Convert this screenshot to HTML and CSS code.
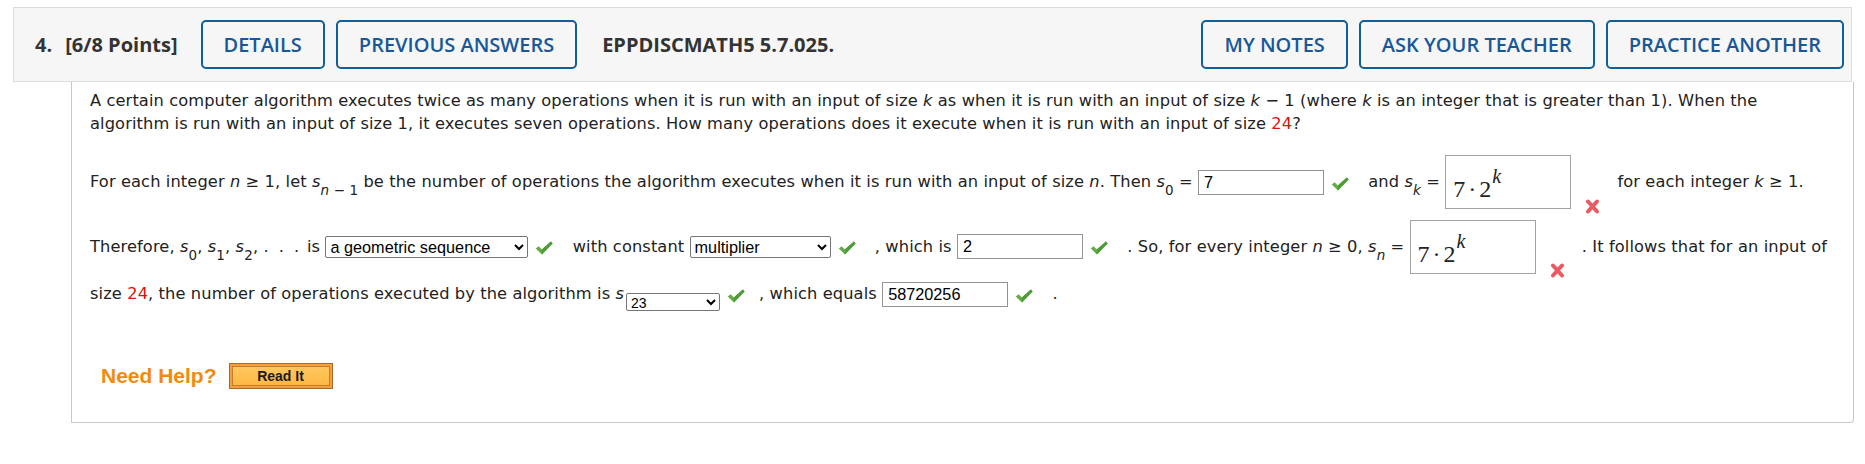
FILE: index.html
```html
<!DOCTYPE html>
<html lang="en">
<head>
<meta charset="utf-8">
<title>Question 4</title>
<link rel="stylesheet" href="styles.css">
</head>
<body>
<div class="question">
  <div class="qhead">
    <span class="qnum">4.</span><span class="qpts">[6/8 Points]</span>
    <div class="hgroup">
      <button class="hbtn">DETAILS</button>
      <button class="hbtn">PREVIOUS ANSWERS</button>
    </div>
    <span class="qid">EPPDISCMATH5 5.7.025.</span>
    <div class="hgroup hright">
      <button class="hbtn">MY NOTES</button>
      <button class="hbtn">ASK YOUR TEACHER</button>
      <button class="hbtn">PRACTICE ANOTHER</button>
    </div>
  </div>
  <div class="qbody">
    <p class="prob">A certain computer algorithm executes twice as many operations when it is run with an input of size <i>k</i> as when it is run with an input of size <i>k</i> &minus; 1 (where <i>k</i> is an integer that is greater than 1). When the<br>algorithm is run with an input of size 1, it executes seven operations. How many operations does it execute when it is run with an input of size <span class="red">24</span>?</p>

    <div class="row r2">For each integer <i>n</i> &ge; 1, let <i>s</i><sub><i>n</i> &minus; 1</sub> be the number of operations the algorithm executes when it is run with an input of size <i>n</i>. Then <i>s</i><sub>0</sub> = <input class="tin" type="text" value="7" readonly><span class="ok"><svg viewBox="0 0 18 14" width="18" height="14"><path d="M0.8 7.6 L3.6 5.2 L6.8 8.6 L15.9 0.6 L17.6 2.4 L6.9 13.4 Z" fill="#62ad47"/><path d="M6.8 8.6 L15.9 0.6 L17.6 2.4 L6.9 13.4 Z" fill="#4f9b37"/></svg></span> and <i>s</i><sub><i>k</i></sub> = <span class="mathbox">7<span class="mdot">&middot;</span>2<span class="msup">k</span></span><span class="bad"><svg viewBox="0 0 15 15" width="15" height="15"><path d="M3 2.5 L12 12.5 M12 2.5 L3 12.5" stroke="#e95a62" stroke-width="4" stroke-linecap="round"/></svg></span> for each integer <i>k</i> &ge; 1.</div>

    <div class="row r3">Therefore, <i>s</i><sub>0</sub>, <i>s</i><sub>1</sub>, <i>s</i><sub>2</sub>, <span class="dots">. . .</span> is <select class="sel sel1"><option>a geometric sequence</option></select><span class="ok"><svg viewBox="0 0 18 14" width="18" height="14"><path d="M0.8 7.6 L3.6 5.2 L6.8 8.6 L15.9 0.6 L17.6 2.4 L6.9 13.4 Z" fill="#62ad47"/><path d="M6.8 8.6 L15.9 0.6 L17.6 2.4 L6.9 13.4 Z" fill="#4f9b37"/></svg></span> with constant <select class="sel sel2"><option>multiplier</option></select><span class="ok"><svg viewBox="0 0 18 14" width="18" height="14"><path d="M0.8 7.6 L3.6 5.2 L6.8 8.6 L15.9 0.6 L17.6 2.4 L6.9 13.4 Z" fill="#62ad47"/><path d="M6.8 8.6 L15.9 0.6 L17.6 2.4 L6.9 13.4 Z" fill="#4f9b37"/></svg></span> , which is <input class="tin" type="text" value="2" readonly><span class="ok"><svg viewBox="0 0 18 14" width="18" height="14"><path d="M0.8 7.6 L3.6 5.2 L6.8 8.6 L15.9 0.6 L17.6 2.4 L6.9 13.4 Z" fill="#62ad47"/><path d="M6.8 8.6 L15.9 0.6 L17.6 2.4 L6.9 13.4 Z" fill="#4f9b37"/></svg></span> . So, for every integer <i>n</i> &ge; 0, <i>s</i><sub><i>n</i></sub> = <span class="mathbox">7<span class="mdot">&middot;</span>2<span class="msup">k</span></span><span class="bad"><svg viewBox="0 0 15 15" width="15" height="15"><path d="M3 2.5 L12 12.5 M12 2.5 L3 12.5" stroke="#e95a62" stroke-width="4" stroke-linecap="round"/></svg></span> . It follows that for an input of<br>size <span class="red">24</span>, the number of operations executed by the algorithm is <i>s</i><select class="sel sel3"><option>23</option></select><span class="ok"><svg viewBox="0 0 18 14" width="18" height="14"><path d="M0.8 7.6 L3.6 5.2 L6.8 8.6 L15.9 0.6 L17.6 2.4 L6.9 13.4 Z" fill="#62ad47"/><path d="M6.8 8.6 L15.9 0.6 L17.6 2.4 L6.9 13.4 Z" fill="#4f9b37"/></svg></span>, which equals <input class="tin" type="text" value="58720256" readonly><span class="ok"><svg viewBox="0 0 18 14" width="18" height="14"><path d="M0.8 7.6 L3.6 5.2 L6.8 8.6 L15.9 0.6 L17.6 2.4 L6.9 13.4 Z" fill="#62ad47"/><path d="M6.8 8.6 L15.9 0.6 L17.6 2.4 L6.9 13.4 Z" fill="#4f9b37"/></svg></span> .</div>

    <div class="help">
      <span class="needhelp">Need Help?</span>
      <span class="readit"><span class="readit-in">Read It</span></span>
    </div>
  </div>
</div>
</body>
</html>
```

FILE: styles.css
```css
html, body {
  margin: 0;
  padding: 0;
  background: #ffffff;
}

.question {
  padding: 7px 13px 0 13px;
}

.qhead {
  display: flex;
  align-items: center;
  box-sizing: border-box;
  height: 75px;
  border: 1px solid #dddddd;
  background: #f6f6f6;
  padding: 0 7px 0 21px;
  font-family: "Open Sans", "Liberation Sans", sans-serif;
  color: #333333;
}

.qnum {
  font-weight: 700;
  font-size: 20px;
  margin-right: 13px;
}

.qpts {
  font-weight: 700;
  font-size: 20px;
  margin-right: 23px;
}

.qid {
  font-weight: 700;
  font-size: 20px;
  margin-left: 25px;
}

.hgroup {
  display: flex;
  gap: 11px;
}

.hright {
  margin-left: auto;
}

.hbtn {
  box-sizing: border-box;
  height: 49px;
  padding: 0 21px;
  border: 2px solid #0f5f98;
  border-radius: 5px;
  background: #f6f6f6;
  color: #17589a;
  font-family: "Open Sans", "Liberation Sans", sans-serif;
  font-weight: 600;
  font-size: 20px;
  text-transform: uppercase;
  cursor: pointer;
}

.qbody {
  margin-left: 58px;
  margin-right: -2px;
  border: 1px solid #c9c9c9;
  border-top: none;
  border-radius: 0 0 4px 0;
  padding: 7px 10px 33px 18px;
  font-family: "DejaVu Sans", Verdana, sans-serif;
  font-size: 16.25px;
  letter-spacing: 0.1px;
  line-height: 23px;
  color: #222222;
  white-space: nowrap;
}

.prob {
  margin: 0;
}

.red {
  color: #e01010;
}

i {
  font-style: italic;
}

sub {
  font-size: 13.5px;
  line-height: 0;
  vertical-align: -8px;
}

.dots {
  letter-spacing: 2.5px;
}

.row {
  margin: 0;
}

.r2 {
  margin-top: 20px;
}

.r3 {
  margin-top: 2px;
}

.tin {
  box-sizing: border-box;
  width: 126px;
  height: 25px;
  border: 1px solid #929292;
  padding: 0 5px;
  margin: 0;
  font-family: "Liberation Sans", Arial, sans-serif;
  font-size: 16.25px;
  letter-spacing: 0;
  color: #000000;
  background: #ffffff;
  vertical-align: middle;
}

.sel {
  box-sizing: border-box;
  height: 22px;
  margin: 0;
  font-family: "Liberation Sans", Arial, sans-serif;
  font-size: 16.25px;
  letter-spacing: 0;
  color: #000000;
  background: #ffffff;
  border: 1px solid #767676;
  border-radius: 2px;
  vertical-align: middle;
}

.sel1 {
  width: 203px;
}

.sel2 {
  width: 141px;
}

.sel3 {
  width: 94px;
  height: 18px;
  font-size: 14px;
  vertical-align: -9px;
  margin-left: 2px;
}

.ok {
  display: inline-block;
  width: 18px;
  height: 14px;
  margin: 0 14px 0 7px;
  vertical-align: -4px;
}

.ok svg,
.bad svg {
  display: block;
}

.mathbox {
  display: inline-block;
  box-sizing: border-box;
  width: 126px;
  height: 54px;
  border: 1px solid #a3a3a3;
  padding: 20px 7px 0 7px;
  font-family: "Liberation Serif", "Times New Roman", serif;
  font-size: 24px;
  letter-spacing: 0;
  line-height: 24px;
  color: #222222;
  vertical-align: middle;
}

.mdot {
  margin: 0 3px;
}

.msup {
  font-style: italic;
  font-size: 20px;
  line-height: 0;
  vertical-align: 14px;
  margin-left: 1px;
}

.bad {
  display: inline-block;
  width: 15px;
  height: 15px;
  padding-bottom: 4px;
  margin: 0 12px 0 14px;
  vertical-align: -31px;
}

.help {
  display: flex;
  align-items: center;
  gap: 12px;
  margin-top: 52px;
  padding-left: 11px;
}

.needhelp {
  font-family: "Liberation Sans", Arial, sans-serif;
  font-weight: 700;
  font-size: 21px;
  letter-spacing: 0;
  line-height: 26px;
  color: #f28a0c;
}

.readit {
  display: flex;
  box-sizing: border-box;
  width: 104px;
  height: 26px;
  padding: 2px;
  border: 1px solid #a9692c;
  background: #f3a03c;
}

.readit-in {
  flex: 1;
  display: flex;
  align-items: center;
  justify-content: center;
  border: 1px solid #c67c30;
  background: linear-gradient(#ffc75e, #ffb845);
  font-family: "Liberation Sans", Arial, sans-serif;
  font-weight: 700;
  font-size: 14px;
  letter-spacing: 0;
  color: #1c1c1c;
}
```
